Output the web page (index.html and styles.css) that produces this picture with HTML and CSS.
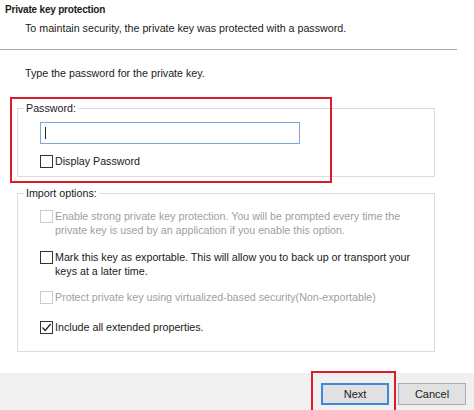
FILE: index.html
```html
<!DOCTYPE html>
<html>
<head>
<meta charset="utf-8">
<link rel="stylesheet" href="styles.css">
</head>
<body>
<div class="page">
  <div class="header">
    <div class="title">Private key protection</div>
    <div class="subtitle">To maintain security, the private key was protected with a password.</div>
  </div>
  <div class="separator"></div>
  <div class="intro">Type the password for the private key.</div>

  <fieldset class="group group-password">
    <legend>Password:</legend>
    <div class="input"><span class="caret"></span></div>
    <div class="option option-display">
      <span class="box"></span>
      <span class="label">Display Password</span>
    </div>
  </fieldset>

  <fieldset class="group group-import">
    <legend>Import options:</legend>
    <div class="option disabled opt1">
      <span class="box"></span>
      <span class="label">Enable strong private key protection. You will be prompted every time the private key is used by an application if you enable this option.</span>
    </div>
    <div class="option opt2">
      <span class="box"></span>
      <span class="label">Mark this key as exportable. This will allow you to back up or transport your keys at a later time.</span>
    </div>
    <div class="option disabled opt3">
      <span class="box"></span>
      <span class="label">Protect private key using virtualized-based security(Non-exportable)</span>
    </div>
    <div class="option opt4">
      <span class="box checked"><svg viewBox="0 0 13 13" width="13" height="13"><path d="M2.5 6.5 L5.2 9.4 L10.6 3" fill="none" stroke="#222" stroke-width="1.3"/></svg></span>
      <span class="label">Include all extended properties.</span>
    </div>
  </fieldset>

  <div class="footer">
    <button class="btn btn-primary">Next</button>
    <button class="btn">Cancel</button>
  </div>

  <div class="highlight hl-password"></div>
  <div class="highlight hl-next"></div>
</div>
</body>
</html>
```

FILE: styles.css
```css
html, body {
  margin: 0;
  padding: 0;
  background: #ffffff;
}
body {
  width: 474px;
  height: 410px;
  overflow: hidden;
  font-family: "Liberation Sans", Arial, sans-serif;
  font-size: 10.7px;
  line-height: 14px;
  color: #1a1a1a;
}
.page {
  position: relative;
  height: 410px;
}
.header {
  padding: 3px 0 0 5px;
}
.title {
  font-weight: bold;
  font-size: 10px;
  letter-spacing: -0.2px;
}
.subtitle {
  margin-top: 4px;
  padding-left: 20px;
}
.separator {
  margin-top: 14px;
  width: 457px;
  height: 0;
  border-top: 1px solid #a8a8a8;
}
.intro {
  margin-top: 16px;
  padding-left: 25px;
}
.group {
  margin: 0 39px 0 17px;
  padding: 0 0 0 22px;
  border: 1px solid #dcdcdc;
  min-width: 0;
}
.group legend {
  margin-left: -16px;
  padding: 0 2px;
  line-height: 14px;
}
.group-password {
  margin-top: 21px;
  padding-bottom: 8px;
}
.group-import {
  margin-top: 9px;
  padding-bottom: 17px;
  padding-right: 18px;
}
.input {
  margin-top: 7px;
  width: 260px;
  height: 22px;
  box-sizing: border-box;
  border: 1px solid #7aa7d8;
  background: #fff;
  display: flex;
  align-items: center;
  padding-left: 4px;
}
.caret {
  width: 1px;
  height: 12px;
  background: #222;
}
.option {
  display: flex;
  align-items: flex-start;
  gap: 2px;
}
.option .box {
  flex: none;
  width: 13px;
  height: 13px;
  box-sizing: border-box;
  border: 1px solid #333;
  background: #fff;
  margin-top: 1px;
  position: relative;
}
.option .box svg {
  position: absolute;
  left: -1px;
  top: -1px;
}
.option.disabled .box {
  border-color: #cccccc;
}
.option.disabled .label {
  color: #a0a0a0;
}
.option-display {
  margin-top: 10px;
}
.opt1 { margin-top: 9px; }
.opt2 { margin-top: 13px; }
.opt3 { margin-top: 12px; }
.opt4 { margin-top: 16px; }
.group-import .option .label {
  margin-top: 0;
}
.footer {
  margin-top: 21px;
  height: 38px;
  background: #f0f0f0;
  display: flex;
  justify-content: flex-end;
  align-items: flex-start;
  gap: 9px;
  padding: 10px 8px 0 0;
  box-sizing: border-box;
}
.btn {
  width: 68px;
  height: 22px;
  margin: 0;
  padding: 0;
  font-family: inherit;
  font-size: 11px;
  color: #1a1a1a;
  background: #e1e1e1;
  border: 1px solid #adadad;
  box-sizing: border-box;
}
.btn-primary {
  border: 2px solid #3c8ad8;
}
.highlight {
  position: absolute;
  border: 2px solid #dc1c2e;
  box-sizing: border-box;
}
.hl-password {
  left: 10px;
  top: 97px;
  width: 322px;
  height: 86px;
}
.hl-next {
  left: 311px;
  top: 371px;
  width: 85px;
  height: 45px;
}
```
